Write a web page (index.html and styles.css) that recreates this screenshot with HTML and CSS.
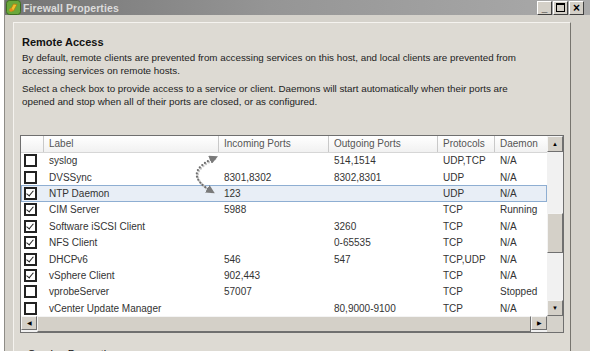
FILE: index.html
```html
<!DOCTYPE html>
<html>
<head>
<meta charset="utf-8">
<link rel="stylesheet" href="styles.css">
</head>
<body>
<div class="desk">
  <div class="window">
    <div class="titlebar">
      <svg class="app-icon" width="15" height="15" viewBox="0 0 15 15">
        <rect x="0.5" y="0.5" width="14" height="14" rx="3" fill="#6aa83a" stroke="#3f6f1f"/>
        <path d="M4 10.5 L7.5 4 L11 4.5 L7.5 11 Z" fill="#f2c12e" stroke="#b07d10" stroke-width="0.8"/>
        <circle cx="5" cy="10" r="1.8" fill="#e88a1a"/>
      </svg>
      <span class="title">Firewall Properties</span>
      <div class="controls">
        <span class="ctl">_</span>
        <span class="ctl"><span class="max"></span></span>
        <span class="ctl close">×</span>
      </div>
    </div>
    <div class="body">
      <section class="panel">
        <h2>Remote Access</h2>
        <p class="p1">By default, remote clients are prevented from accessing services on this host, and local clients are prevented from<br>accessing services on remote hosts.</p>
        <p class="p2">Select a check box to provide access to a service or client. Daemons will start automatically when their ports are<br>opened and stop when all of their ports are closed, or as configured.</p>
        <div class="table">
          <div class="table-main">
            <div class="rows">
              <div class="row head">
                <div class="c"></div>
                <div class="c">Label</div>
                <div class="c">Incoming Ports</div>
                <div class="c">Outgoing Ports</div>
                <div class="c">Protocols</div>
                <div class="c">Daemon</div>
              </div>
              <div class="row">
                <div class="c"><span class="cb"></span></div>
                <div class="c">syslog</div><div class="c"></div><div class="c">514,1514</div><div class="c">UDP,TCP</div><div class="c">N/A</div>
              </div>
              <div class="row">
                <div class="c"><span class="cb"></span></div>
                <div class="c">DVSSync</div><div class="c">8301,8302</div><div class="c">8302,8301</div><div class="c">UDP</div><div class="c">N/A</div>
              </div>
              <div class="row selected">
                <div class="c"><span class="cb on"></span></div>
                <div class="c">NTP Daemon</div><div class="c">123</div><div class="c"></div><div class="c">UDP</div><div class="c">N/A</div>
              </div>
              <div class="row">
                <div class="c"><span class="cb on"></span></div>
                <div class="c">CIM Server</div><div class="c">5988</div><div class="c"></div><div class="c">TCP</div><div class="c">Running</div>
              </div>
              <div class="row">
                <div class="c"><span class="cb on"></span></div>
                <div class="c">Software iSCSI Client</div><div class="c"></div><div class="c">3260</div><div class="c">TCP</div><div class="c">N/A</div>
              </div>
              <div class="row">
                <div class="c"><span class="cb on"></span></div>
                <div class="c">NFS Client</div><div class="c"></div><div class="c">0-65535</div><div class="c">TCP</div><div class="c">N/A</div>
              </div>
              <div class="row">
                <div class="c"><span class="cb on"></span></div>
                <div class="c">DHCPv6</div><div class="c">546</div><div class="c">547</div><div class="c">TCP,UDP</div><div class="c">N/A</div>
              </div>
              <div class="row">
                <div class="c"><span class="cb on"></span></div>
                <div class="c">vSphere Client</div><div class="c">902,443</div><div class="c"></div><div class="c">TCP</div><div class="c">N/A</div>
              </div>
              <div class="row">
                <div class="c"><span class="cb"></span></div>
                <div class="c">vprobeServer</div><div class="c">57007</div><div class="c"></div><div class="c">TCP</div><div class="c">Stopped</div>
              </div>
              <div class="row">
                <div class="c"><span class="cb"></span></div>
                <div class="c">vCenter Update Manager</div><div class="c"></div><div class="c">80,9000-9100</div><div class="c">TCP</div><div class="c">N/A</div>
              </div>
            </div>
            <div class="vscroll">
              <span class="sbtn">▲</span>
              <div class="vtrack"><span class="vthumb"></span></div>
              <span class="sbtn">▼</span>
            </div>
          </div>
          <div class="hscroll">
            <span class="sbtn">◀</span>
            <span class="hthumb"></span>
            <span class="sbtn">▶</span>
            <span class="corner"></span>
          </div>
          <svg class="hint-arrow" width="45" height="45" viewBox="0 0 45 45">
            <defs>
              <marker id="ah" viewBox="0 0 10 10" refX="5" refY="5" markerWidth="4" markerHeight="4" orient="auto-start-reverse">
                <path d="M0 0 L10 5 L0 10 Z" fill="#7a7a7a"/>
              </marker>
            </defs>
            <path d="M33 7 Q0 22 30 40" fill="none" stroke="#c8c8c8" stroke-width="2.6" stroke-dasharray="0 3.4" stroke-linecap="round" transform="translate(1 1)"/>
            <path d="M33 7 Q0 22 30 40" fill="none" stroke="#6e6e6e" stroke-width="2.2" stroke-dasharray="0 3.4" stroke-linecap="round" marker-start="url(#ah)" marker-end="url(#ah)"/>
          </svg>
        </div>
        <h3>Service Properties</h3>
      </section>
    </div>
  </div>
</div>
</body>
</html>
```
FILE: styles.css
```css
html, body {
  margin: 0;
  padding: 0;
}
body {
  width: 590px;
  height: 351px;
  overflow: hidden;
  background: #ffffff;
  font-family: "Liberation Sans", Arial, sans-serif;
}
.desk {
  display: flex;
  height: 351px;
  padding-left: 4px;
}
.window {
  flex: 1;
  display: flex;
  flex-direction: column;
  background: #d5d2cb;
  border-left: 1px solid #8e8c87;
}
.titlebar {
  height: 21px;
  display: flex;
  align-items: center;
  background: linear-gradient(to right, #747474, #959595 45%, #aaaaaa);
  padding-left: 1px;
}
.app-icon {
  display: block;
  margin-right: 2px;
}
.title {
  color: #dcdcdc;
  font-weight: bold;
  font-size: 10.5px;
  letter-spacing: 0.1px;
}
.controls {
  margin-left: auto;
  margin-right: 6px;
  display: flex;
  gap: 1px;
}
.ctl {
  width: 13px;
  height: 12px;
  background: #d4d0c8;
  border: 1px solid;
  border-color: #ffffff #404040 #404040 #ffffff;
  font-size: 10px;
  line-height: 10px;
  color: #000;
  display: flex;
  align-items: center;
  justify-content: center;
  font-weight: bold;
}
.ctl .max {
  width: 7px;
  height: 6px;
  border: 1px solid #000;
  border-top-width: 2px;
}
.ctl.close {
  font-size: 12px;
}
.body {
  flex: 1;
  padding: 7px 19px 0 8px;
  display: flex;
}
.panel {
  flex: 1;
  background: #dddad3;
  border-top: 1px solid #f5f3ef;
  border-left: 1px solid #f5f3ef;
  border-right: 1px solid #77756f;
  padding: 12px 5px 0 8px;
}
h2 {
  margin: 0;
  font-size: 11px;
  line-height: 14px;
  font-weight: bold;
  color: #111;
}
p {
  margin: 0;
  font-size: 9.8px;
  line-height: 13px;
  color: #222;
}
.p1 { margin-top: 1.5px; }
.p2 { margin-top: 5px; }
.table {
  position: relative;
  margin-top: 27px;
  margin-left: -2px;
  width: 542px;
  border: 1px solid #6f6f6f;
  background: #ffffff;
}
.table-main {
  display: flex;
}
.rows {
  width: 526px;
}
.row {
  display: grid;
  grid-template-columns: 23px 175px 110px 109px 57px 52px;
  height: 16.4px;
  font-size: 10px;
  color: #333;
  align-items: center;
}
.row .c {
  padding-left: 5px;
  white-space: nowrap;
  overflow: hidden;
}
.row .c:first-child {
  padding-left: 3px;
  display: flex;
  align-items: center;
}
.row.head {
  height: 17px;
  background: linear-gradient(#ffffff, #f1f1f1);
  border-bottom: 1px solid #d6d6d6;
  box-sizing: border-box;
  color: #555;
}
.row.head .c {
  border-right: 1px solid #c9c9c9;
  height: 100%;
  line-height: 16px;
  box-sizing: border-box;
}
.row.head .c:last-child {
  border-right: none;
}
.row.selected {
  background: #e8eef6;
  box-shadow: inset 0 0 0 1px #8eaed2;
}
.cb {
  width: 9px;
  height: 9px;
  border: 2px solid #222;
  background: #fff;
  display: block;
  position: relative;
}
.cb.on::after {
  content: "";
  position: absolute;
  left: 2px;
  top: 0px;
  width: 3px;
  height: 6px;
  border: solid #222;
  border-width: 0 1.7px 1.7px 0;
  transform: rotate(40deg);
}
.vscroll {
  width: 16px;
  display: flex;
  flex-direction: column;
  background: #f1f1f1;
}
.sbtn {
  width: 14px;
  height: 14px;
  background: #d4d0c8;
  border: 1px solid;
  border-color: #f4f4f4 #707070 #707070 #f4f4f4;
  font-size: 6px;
  line-height: 14px;
  text-align: center;
  color: #000;
  flex: none;
}
.vtrack {
  flex: 1;
  display: flex;
  flex-direction: column;
  padding-top: 61px;
}
.vthumb {
  height: 38px;
  width: 14px;
  background: #d4d0c8;
  border: 1px solid;
  border-color: #f4f4f4 #707070 #707070 #f4f4f4;
}
.hscroll {
  display: flex;
  height: 16px;
  background: #f1f1f1;
}
.hscroll .sbtn {
  height: 12px;
  line-height: 12px;
}
.hthumb {
  flex: 1;
  background: #d4d0c8;
  border: 1px solid;
  border-color: #f4f4f4 #707070 #707070 #f4f4f4;
}
.corner {
  width: 16px;
  background: #d5d2cb;
}
.hint-arrow {
  position: absolute;
  left: 160px;
  top: 15px;
}
h3 {
  margin: 15px 0 0 6px;
  font-size: 11px;
  font-weight: normal;
  color: #111;
}
```
